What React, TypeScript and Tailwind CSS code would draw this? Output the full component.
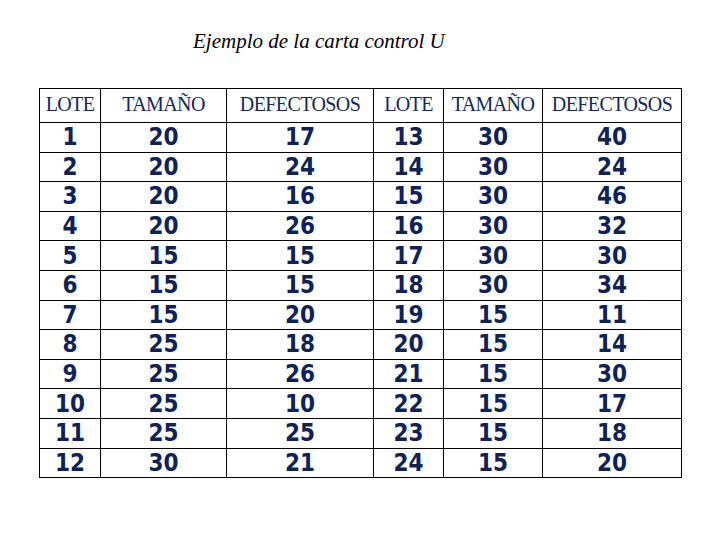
const left = [
  [1, 20, 17],
  [2, 20, 24],
  [3, 20, 16],
  [4, 20, 26],
  [5, 15, 15],
  [6, 15, 15],
  [7, 15, 20],
  [8, 25, 18],
  [9, 25, 26],
  [10, 25, 10],
  [11, 25, 25],
  [12, 30, 21],
];

const right = [
  [13, 30, 40],
  [14, 30, 24],
  [15, 30, 46],
  [16, 30, 32],
  [17, 30, 30],
  [18, 30, 34],
  [19, 15, 11],
  [20, 15, 14],
  [21, 15, 30],
  [22, 15, 17],
  [23, 15, 18],
  [24, 15, 20],
];

const headers = ['LOTE', 'TAMAÑO', 'DEFECTOSOS', 'LOTE', 'TAMAÑO', 'DEFECTOSOS'];

export default function App() {
  return (
    <div className="w-[720px] h-[540px] bg-white overflow-hidden">
      {/* Title */}
      <div
        className="pl-[193px] pt-[27px] h-[88px] text-[21px] leading-[28px] italic text-black"
        style={{ fontFamily: '"Liberation Serif", serif' }}
      >
        Ejemplo de la carta control U
      </div>

      {/* Table */}
      <div className="pl-[39px]">
        <table className="table-fixed border-collapse w-[642px] text-[#0e2257]">
          <colgroup>
            <col className="w-[61px]" />
            <col className="w-[126px]" />
            <col className="w-[147px]" />
            <col className="w-[70px]" />
            <col className="w-[99px]" />
            <col className="w-[139px]" />
          </colgroup>
          <thead>
            <tr className="h-[34px]">
              {headers.map((h, i) => (
                <th
                  key={i}
                  className="border border-black p-0 pb-[3px] font-normal text-[20px] tracking-[-0.03em] text-center align-middle text-[#13275c]"
                  style={{ fontFamily: '"Liberation Serif", serif' }}
                >
                  {h}
                </th>
              ))}
            </tr>
          </thead>
          <tbody>
            {left.map((row, r) => (
              <tr key={r} className="h-[29.6px]">
                {[...row, ...right[r]].map((v, c) => (
                  <td
                    key={c}
                    className="border border-black p-0 text-center align-middle font-bold text-[24px] leading-none"
                    style={{ fontFamily: '"DejaVu Sans Condensed", "DejaVu Sans", sans-serif' }}
                  >
                    {v}
                  </td>
                ))}
              </tr>
            ))}
          </tbody>
        </table>
      </div>
    </div>
  );
}
